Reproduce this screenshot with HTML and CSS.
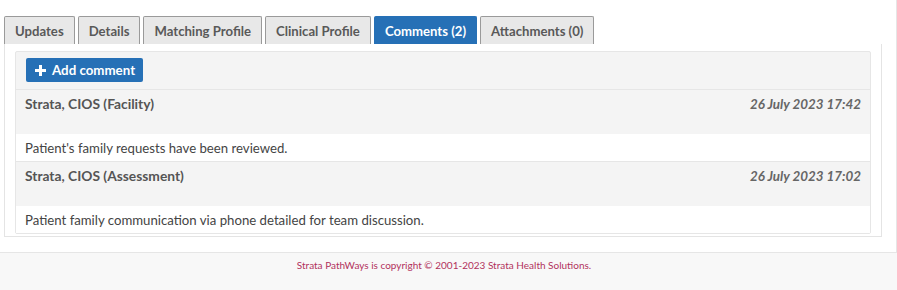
FILE: index.html
```html
<!DOCTYPE html>
<html>
<head>
<meta charset="utf-8">
<link rel="stylesheet" href="styles.css">
</head>
<body>
<div class="page">
  <div class="tabs">
    <div class="tab">Updates</div>
    <div class="tab">Details</div>
    <div class="tab">Matching Profile</div>
    <div class="tab">Clinical Profile</div>
    <div class="tab active">Comments (2)</div>
    <div class="tab">Attachments (0)</div>
  </div>
  <div class="panel">
    <div class="comments">
      <div class="toolbar">
        <button class="btn"><svg class="plus" width="11" height="11" viewBox="0 0 11 11"><path d="M4 0h3v4h4v3H7v4H4V7H0V4h4z" fill="#fff"/></svg>Add comment</button>
      </div>
      <div class="comment">
        <div class="head"><span class="author">Strata, CIOS (Facility)</span><span class="date">26 July 2023 17:42</span></div>
        <div class="body">Patient's family requests have been reviewed.</div>
      </div>
      <div class="comment">
        <div class="head"><span class="author">Strata, CIOS (Assessment)</span><span class="date">26 July 2023 17:02</span></div>
        <div class="body">Patient family communication via phone detailed for team discussion.</div>
      </div>
    </div>
  </div>
</div>
<div class="footer">Strata PathWays is copyright © 2001-2023 Strata Health Solutions.</div>
</body>
</html>
```
FILE: styles.css
```css
html, body { margin: 0; padding: 0; }
body {
  font-family: "Lato", "Liberation Sans", sans-serif;
  font-size: 13.2px;
  color: #444;
  background: #f8f8f8;
  width: 897px;
  height: 290px;
  overflow: hidden;
}
.page {
  background: #fff;
  padding: 16px 14px 15px 4px;
  border-right: 1px solid #e6e6e6;
  border-bottom: 1px solid #e6e6e6;
  box-sizing: border-box;
  height: 253px;
}
.tabs { display: flex; gap: 3px; height: 28px; }
.tab {
  box-sizing: border-box;
  height: 28px;
  padding: 0 10px;
  border: 1px solid #9a9a9a;
  border-bottom: none;
  background: #e8e8e8;
  color: #595959;
  font-weight: bold;
  font-size: 13.15px;
  line-height: 28px;
  white-space: nowrap;
  border-radius: 2px 2px 0 0;
}
.tab.active {
  background: #2670b6;
  border-color: #2670b6;
  color: #fff;
}
.panel {
  border: 1px solid #e4e4e4;
  border-top: none;
  padding: 7px 10px 4px 10px;
  height: 193px;
  box-sizing: border-box;
}
.comments {
  background: #f4f4f4;
  border: 1px solid #e6e6e6;
  border-radius: 2px;
}
.toolbar { padding: 6px 10px 7px 10px; border-bottom: 1px solid #e6e6e6; }
.btn {
  display: flex; align-items: center; gap: 6px;
  height: 24px;
  padding: 0 8px 0 9px;
  background: #2670b6;
  color: #fff;
  border: none;
  border-radius: 2px;
  font-family: inherit;
  font-weight: bold;
  font-size: 13.3px;
  white-space: nowrap;
}
.plus { flex: none; }
.comment { border-bottom: 1px solid #e6e6e6; }
.comment:last-child { border-bottom: none; }
.head {
  display: flex; justify-content: space-between;
  height: 44px;
  padding: 5px 9px 0 9px;
  box-sizing: border-box;
  font-weight: bold;
  font-size: 13.8px;
  color: #555;
  line-height: 18px;
}
.date { font-style: italic; color: #666; font-size: 13.4px; }
.body {
  background: #fff;
  height: 27px;
  line-height: 28px;
  padding: 0 9px;
  color: #444;
}
.footer {
  text-align: center;
  color: #b2325d;
  font-size: 10px;
  padding: 6px 9px 0 0;
}
```
